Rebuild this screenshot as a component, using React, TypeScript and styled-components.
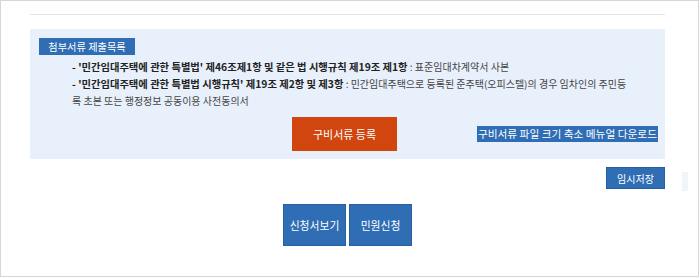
import React from "react";
import styled, { createGlobalStyle } from "styled-components";

const Global = createGlobalStyle`
  html, body { margin: 0; padding: 0; background: #ffffff; }
  body { font-family: "Noto Sans CJK KR", "Noto Sans", sans-serif; }
  * { box-sizing: border-box; }
`;

const Frame = styled.div`
  width: 699px;
  height: 277px;
  border: 1px solid #d6d6d6;
  padding: 13px 33px 0 29px;
  position: relative;
`;

const Divider = styled.div`
  height: 1px;
  background: #e6e6e6;
`;

const Panel = styled.section`
  margin-top: 14px;
  height: 130px;
  background: #e8f0fb;
  padding: 9px 7px 9px 9px;
  display: flex;
  flex-direction: column;
`;

const Label = styled.div`
  align-self: flex-start;
  width: 96px;
  height: 17px;
  background: #2f6db5;
  color: #ffffff;
  font-size: 10.2px;
  line-height: 17px;
  text-align: center;
`;

const List = styled.div`
  margin-top: 3px;
  padding-left: 33px;
  padding-right: 24px;
  font-size: 10px;
  line-height: 17px;
  color: #444;
  word-break: break-all;
`;

const Strong = styled.b`
  font-weight: 700;
  font-size: 10.3px;
  color: #222;
`;

const Actions = styled.div`
  margin-top: 8px;
  display: grid;
  grid-template-columns: 1fr auto 1fr;
  align-items: center;
`;

const RegisterButton = styled.button`
  grid-column: 2;
  width: 105px;
  height: 34px;
  border: none;
  background: #d1450f;
  color: #fff;
  font-family: inherit;
  font-size: 11px;
  padding: 0;
  transform: translateX(-4px);
`;

const ManualLink = styled.a`
  grid-column: 3;
  justify-self: end;
  background: #2f6db5;
  color: #fff;
  font-size: 10.7px;
  line-height: 16px;
  padding: 0 1px;
  white-space: nowrap;
  text-decoration: none;
`;

const SaveRow = styled.div`
  margin-top: 8px;
  display: flex;
  justify-content: flex-end;
`;

const SaveButton = styled.button`
  width: 59px;
  height: 22px;
  border: 1px solid #275f9e;
  background: #2f6db5;
  color: #fff;
  font-family: inherit;
  font-size: 10px;
  padding: 0;
`;

const Ghost = styled.div`
  position: absolute;
  right: 10px;
  top: 171px;
  width: 6px;
  height: 19px;
  background: #f1f4f9;
`;

const BottomRow = styled.div`
  margin-top: 15px;
  display: flex;
  justify-content: center;
  gap: 3px;
`;

const BigButton = styled.button`
  width: 63px;
  height: 42px;
  border: 1px solid #27609f;
  background: #2f6db5;
  color: #fff;
  font-family: inherit;
  font-size: 10.8px;
  padding: 0;
`;

export default function App() {
  return (
    <>
      <Global />
      <Frame>
        <Divider />
        <Panel>
          <Label>첨부서류 제출목록</Label>
          <List>
            <div>
              <Strong>- '민간임대주택에 관한 특별법' 제46조제1항 및 같은 법 시행규칙 제19조 제1항</Strong> : 표준임대차계약서 사본
            </div>
            <div>
              <Strong>- '민간임대주택에 관한 특별법 시행규칙' 제19조 제2항 및 제3항</Strong> : 민간임대주택으로 등록된 준주택(오피스텔)의 경우 임차인의 주민등록 초본 또는 행정정보 공동이용 사전동의서
            </div>
          </List>
          <Actions>
            <RegisterButton>구비서류 등록</RegisterButton>
            <ManualLink href="#">구비서류 파일 크기 축소 메뉴얼 다운로드</ManualLink>
          </Actions>
        </Panel>
        <SaveRow>
          <SaveButton>임시저장</SaveButton>
        </SaveRow>
        <BottomRow>
          <BigButton>신청서보기</BigButton>
          <BigButton>민원신청</BigButton>
        </BottomRow>
        <Ghost />
      </Frame>
    </>
  );
}
